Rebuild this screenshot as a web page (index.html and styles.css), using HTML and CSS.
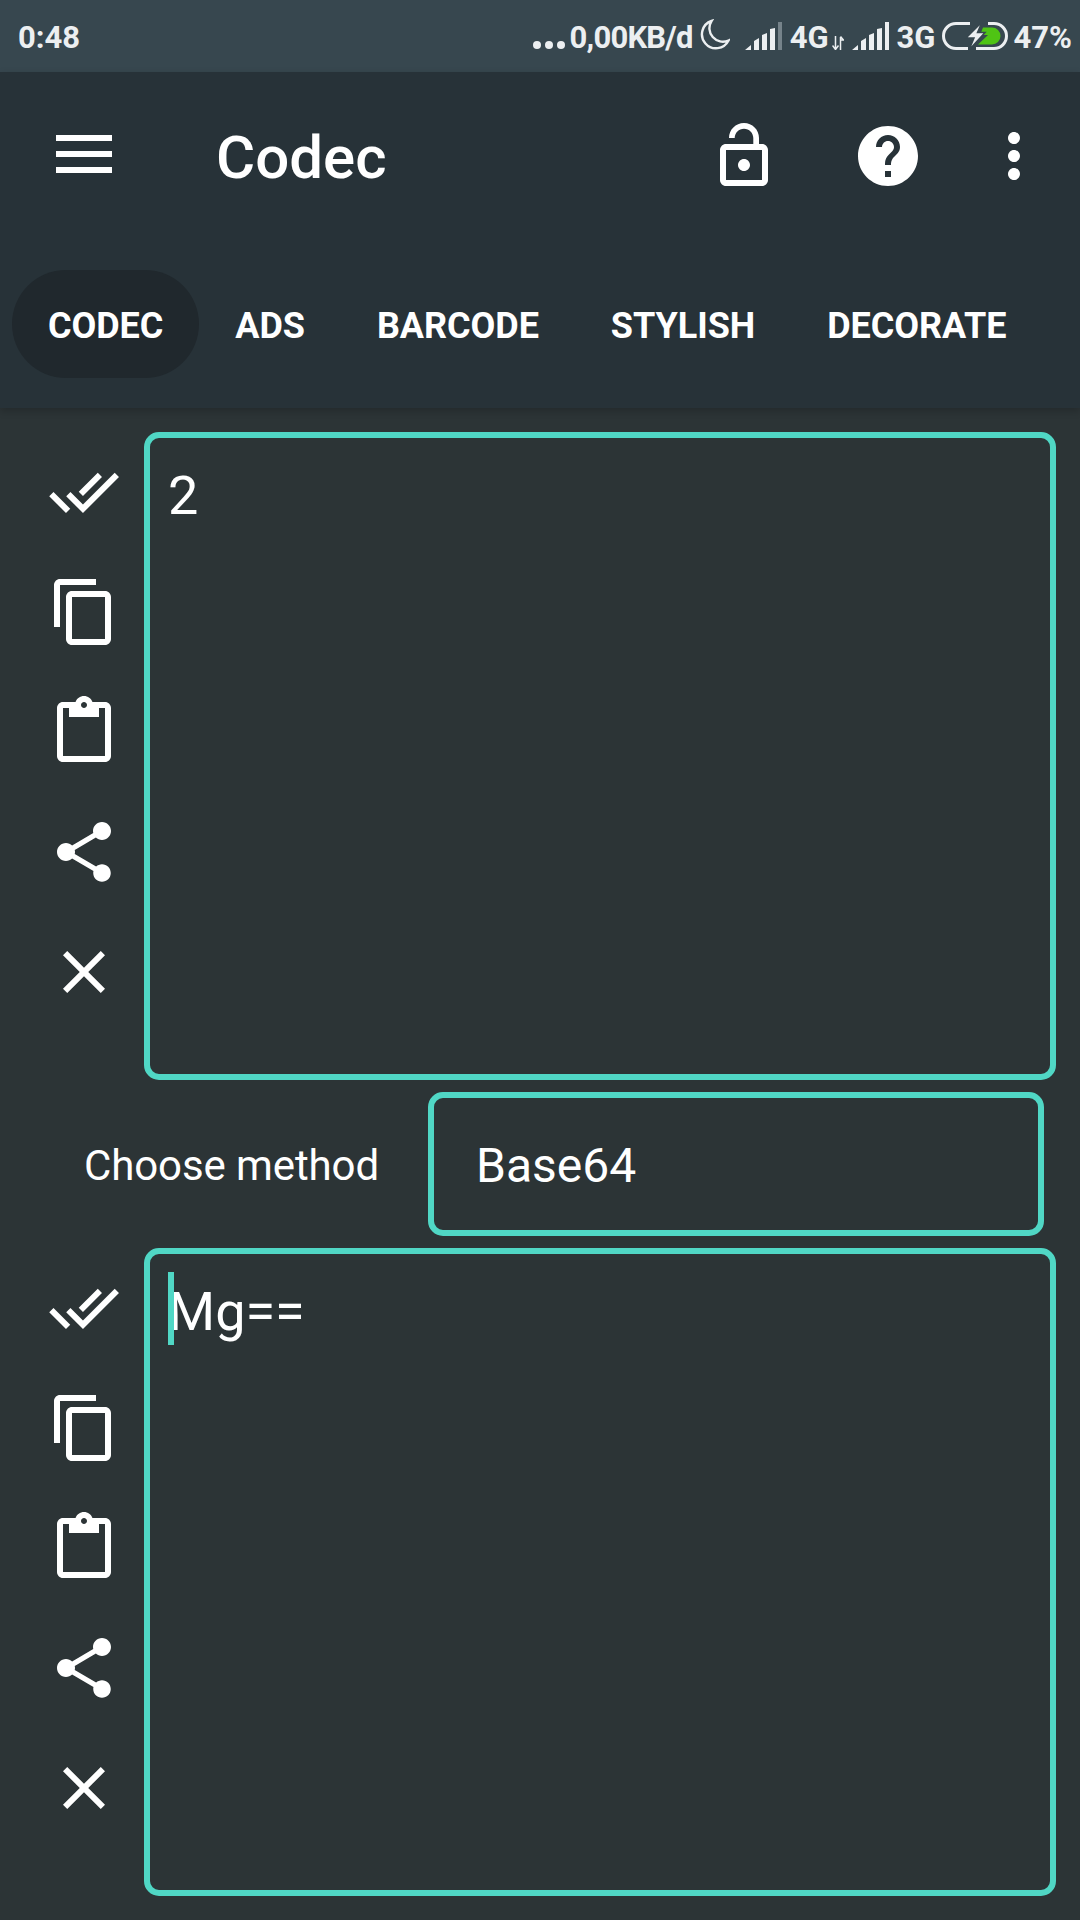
FILE: index.html
```html
<!DOCTYPE html>
<html lang="en">
<head>
    <meta charset="UTF-8">
    <title>Codec</title>
    <link rel="stylesheet" href="styles.css">
</head>
<body>
<svg class="icon-defs">
    <symbol id="i-done" viewBox="0 0 24 24"><path d="M18 7l-1.41-1.41-6.34 6.34 1.41 1.41L18 7zm4.24-1.41L11.66 16.17 7.48 12l-1.41 1.41L11.66 19l12-12-1.42-1.41zM.41 13.41L6 19l1.41-1.41L1.83 12 .41 13.41z"/></symbol>
    <symbol id="i-copy" viewBox="0 0 24 24"><path d="M16 1H4c-1.1 0-2 .9-2 2v14h2V3h12V1zm3 4H8c-1.1 0-2 .9-2 2v14c0 1.1.9 2 2 2h11c1.1 0 2-.9 2-2V7c0-1.1-.9-2-2-2zm0 16H8V7h11v14z"/></symbol>
    <symbol id="i-paste" viewBox="0 0 24 24"><path d="M19 2h-4.18C14.4.84 13.3 0 12 0c-1.3 0-2.4.84-2.82 2H5c-1.1 0-2 .9-2 2v16c0 1.1.9 2 2 2h14c1.1 0 2-.9 2-2V4c0-1.1-.9-2-2-2zm-7 0c.55 0 1 .45 1 1s-.45 1-1 1-1-.45-1-1 .45-1 1-1zm7 18H5V4h2v3h10V4h2v16z"/></symbol>
    <symbol id="i-share" viewBox="0 0 24 24"><path d="M18 16.08c-.76 0-1.44.3-1.96.77L8.91 12.7c.05-.23.09-.46.09-.7s-.04-.47-.09-.7l7.05-4.11c.54.5 1.25.81 2.04.81 1.66 0 3-1.34 3-3s-1.34-3-3-3-3 1.34-3 3c0 .24.04.47.09.7L8.04 9.81C7.5 9.31 6.79 9 6 9c-1.66 0-3 1.34-3 3s1.34 3 3 3c.79 0 1.5-.31 2.04-.81l7.12 4.16c-.05.21-.08.43-.08.65 0 1.61 1.31 2.92 2.92 2.92 1.61 0 2.92-1.31 2.92-2.92s-1.31-2.92-2.92-2.92z"/></symbol>
    <symbol id="i-clear" viewBox="0 0 24 24"><path d="M19 6.41L17.59 5 12 10.59 6.41 5 5 6.41 10.59 12 5 17.59 6.41 19 12 13.41 17.59 19 19 17.59 13.41 12z"/></symbol>
    <symbol id="i-signal" viewBox="0 0 38 28"><path d="M0 28L6 23V28ZM9 19L14 16V28H9ZM17 13L22 11V28H17ZM25 7L30 6V28H25Z"/></symbol>
</svg>

<!-- Status bar -->
<div class="status-bar">
    <span class="status-time">0:48</span>
    <div class="status-right">
        <span class="status-dots"><i></i><i></i><i></i></span>
        <span class="status-speed">0,00KB/d</span>
        <svg class="status-moon" viewBox="0 0 30 32"><path d="M11.5 2A14 14 0 1 0 28.5 21.5A13.5 13.5 0 0 1 11.5 2Z"/></svg>
        <svg class="status-signal" viewBox="0 0 38 28"><use href="#i-signal"/><rect class="signal-off" x="33" y="0" width="4" height="28"/></svg>
        <span class="status-net">4G</span>
        <svg class="status-arrows" viewBox="0 0 12 14"><path d="M3.5 0V13M0.5 9.5L3.5 13.5L6.5 9.5M8.5 14V1M8.5 0.5L11.5 4H8.5"/></svg>
        <svg class="status-signal second" viewBox="0 0 38 28"><use href="#i-signal"/><rect x="33" y="0" width="4" height="28"/></svg>
        <span class="status-net">3G</span>
        <svg class="status-battery" viewBox="0 0 66 28">
            <path class="batt-line" d="M28 1.5H14A12.5 12.5 0 0 0 14 26.5H26M46 1.5H52A12.5 12.5 0 0 1 52 26.5H34"/>
            <path class="batt-fill" d="M41 5.5H50A8.5 8.5 0 0 1 50 22.5H36L46 13H38Z"/>
            <path class="batt-bolt" d="M40 0L24 16H32L27 28L43 10.5H35.5Z"/>
        </svg>
        <span class="status-level">47%</span>
    </div>
</div>

<!-- App bar with tabs -->
<header class="app-bar">
    <div class="toolbar">
        <div class="menu-icon"><i></i><i></i><i></i></div>
        <div class="toolbar-title">Codec</div>
        <div class="toolbar-actions">
            <svg class="action-icon lock" viewBox="0 0 24 24"><path d="M12 17c1.1 0 2-.9 2-2s-.9-2-2-2-2 .9-2 2 .9 2 2 2zm6-9h-1V6c0-2.76-2.24-5-5-5S7 3.24 7 6h1.9c0-1.71 1.39-3.1 3.1-3.1 1.71 0 3.1 1.39 3.1 3.1v2H6c-1.1 0-2 .9-2 2v10c0 1.1.9 2 2 2h12c1.1 0 2-.9 2-2V10c0-1.1-.9-2-2-2zm0 12H6V10h12v10z"/></svg>
            <svg class="action-icon" viewBox="0 0 24 24"><path d="M12 2C6.48 2 2 6.48 2 12s4.48 10 10 10 10-4.48 10-10S17.52 2 12 2zm1 17h-2v-2h2v2zm2.07-7.75l-.9.92C13.45 12.9 13 13.5 13 15h-2v-.5c0-1.1.45-2.1 1.17-2.83l1.24-1.26c.37-.36.59-.86.59-1.41 0-1.1-.9-2-2-2s-2 .9-2 2H8c0-2.21 1.79-4 4-4s4 1.79 4 4c0 .88-.36 1.68-.93 2.25z"/></svg>
            <svg class="action-icon" viewBox="0 0 24 24"><path d="M12 8c1.1 0 2-.9 2-2s-.9-2-2-2-2 .9-2 2 .9 2 2 2zm0 2c-1.1 0-2 .9-2 2s.9 2 2 2 2-.9 2-2-.9-2-2-2zm0 6c-1.1 0-2 .9-2 2s.9 2 2 2 2-.9 2-2-.9-2-2-2z"/></svg>
        </div>
    </div>
    <nav class="tabs">
        <div class="tab active">CODEC</div>
        <div class="tab">ADS</div>
        <div class="tab">BARCODE</div>
        <div class="tab">STYLISH</div>
        <div class="tab">DECORATE</div>
    </nav>
</header>

<div class="main-content">
    <div class="panel">
        <div class="tools">
            <svg class="tool-icon"><use href="#i-done"/></svg>
            <svg class="tool-icon"><use href="#i-copy"/></svg>
            <svg class="tool-icon"><use href="#i-paste"/></svg>
            <svg class="tool-icon"><use href="#i-share"/></svg>
            <svg class="tool-icon"><use href="#i-clear"/></svg>
        </div>
        <div class="text-box">2</div>
    </div>

    <div class="method-row">
        <div class="method-label">Choose method</div>
        <div class="method-select">Base64</div>
    </div>

    <div class="panel">
        <div class="tools">
            <svg class="tool-icon"><use href="#i-done"/></svg>
            <svg class="tool-icon"><use href="#i-copy"/></svg>
            <svg class="tool-icon"><use href="#i-paste"/></svg>
            <svg class="tool-icon"><use href="#i-share"/></svg>
            <svg class="tool-icon"><use href="#i-clear"/></svg>
        </div>
        <div class="text-box"><span class="caret"></span>Mg==</div>
    </div>
</div>
</body>
</html>
```

FILE: styles.css
```css
* {
  margin: 0;
  padding: 0;
  box-sizing: border-box;
}

:root {
  --status-color: #37474f;
  --bar-color: #273238;
  --background-color: #2c3436;
  --accent: #50d7c5;
  --status-text: #eceff1;
  --white: #ffffff;
}

body {
  width: 1080px;
  height: 1920px;
  overflow: hidden;
  font-family: Roboto, "Liberation Sans", sans-serif;
  background-color: var(--background-color);
  color: var(--white);
}

.icon-defs {
  display: none;
}

/* Status bar */
.status-bar {
  display: flex;
  justify-content: space-between;
  align-items: center;
  height: 72px;
  padding: 2px 8px 0 18px;
  background-color: var(--status-color);
  color: var(--status-text);
  font-size: 31px;
  font-weight: 700;
}

.status-right {
  display: flex;
  align-items: center;
}

.status-dots {
  display: flex;
  gap: 4px;
  margin-top: 16px;
  margin-right: 5px;
}

.status-dots i {
  display: block;
  width: 8px;
  height: 8px;
  border-radius: 50%;
  background-color: var(--status-text);
}

.status-speed {
  letter-spacing: -0.8px;
}

.status-moon {
  width: 30px;
  height: 32px;
  margin-top: -4px;
  margin-left: 7px;
  fill: none;
  stroke: var(--status-text);
  stroke-width: 2.4;
}

.status-signal {
  width: 38px;
  height: 28px;
  margin-top: -2px;
  margin-left: 15px;
  fill: var(--status-text);
}

.status-signal.second {
  margin-left: 8px;
}

.signal-off {
  fill: #76838a;
}

.status-net {
  margin-left: 7px;
}

.status-arrows {
  width: 12px;
  height: 14px;
  margin-left: 3px;
  margin-top: 12px;
  fill: none;
  stroke: var(--status-text);
  stroke-width: 1.5;
}

.status-battery {
  width: 66px;
  height: 28px;
  margin-top: -2px;
  margin-left: 6px;
}

.batt-line {
  fill: none;
  stroke: var(--status-text);
  stroke-width: 3;
}

.batt-fill {
  fill: #4fc414;
}

.batt-bolt {
  fill: var(--status-text);
  stroke: var(--status-color);
  stroke-width: 1.5;
}

.status-level {
  margin-left: 6px;
}

/* App bar */
.app-bar {
  background-color: var(--bar-color);
  box-shadow: 0 3px 8px rgba(0, 0, 0, 0.2);
  position: relative;
}

.toolbar {
  display: flex;
  align-items: center;
  height: 168px;
}

.menu-icon {
  display: flex;
  flex-direction: column;
  gap: 10px;
  width: 56px;
  margin-left: 56px;
  margin-top: -4px;
}

.menu-icon i {
  display: block;
  height: 6px;
  background-color: var(--white);
}

.toolbar-title {
  margin-left: 104px;
  padding-top: 3px;
  font-size: 60px;
  font-weight: 500;
}

.toolbar-actions {
  display: flex;
  gap: 54px;
  margin-left: auto;
  margin-right: 30px;
}

.action-icon {
  width: 72px;
  height: 72px;
  fill: var(--white);
}

.action-icon.lock {
  margin-right: 18px;
}

.tabs {
  display: flex;
  height: 168px;
  padding: 30px 0 30px 12px;
}

.tab {
  display: flex;
  align-items: center;
  height: 108px;
  padding: 3px 36px 0;
  border-radius: 54px;
  font-size: 36px;
  font-weight: 700;
  letter-spacing: -0.05px;
}

.tab.active {
  background-color: #20282d;
}

/* Main content */
.main-content {
  display: flex;
  flex-direction: column;
  gap: 12px;
  padding: 24px 24px 0;
}

.panel {
  display: flex;
  height: 648px;
}

.tools {
  display: flex;
  flex-direction: column;
  align-items: center;
  justify-content: space-around;
  width: 120px;
  height: 600px;
  flex-shrink: 0;
}

.tool-icon {
  width: 72px;
  height: 72px;
  fill: var(--white);
}

.text-box {
  flex: 1;
  position: relative;
  padding: 20px 18px;
  border: 6px solid var(--accent);
  border-radius: 15px;
  font-size: 54px;
  line-height: 76px;
}

.caret {
  position: absolute;
  left: 18px;
  top: 18px;
  width: 6px;
  height: 73px;
  background-color: var(--accent);
}

.method-row {
  display: flex;
  align-items: center;
  height: 144px;
  padding: 0 12px 0 60px;
}

.method-label {
  width: 344px;
  padding-top: 2px;
  font-size: 42px;
  letter-spacing: -0.1px;
}

.method-select {
  display: flex;
  align-items: center;
  flex: 1;
  height: 144px;
  padding: 2px 38px 0 42px;
  border: 6px solid var(--accent);
  border-radius: 15px;
  font-size: 48px;
}
```
